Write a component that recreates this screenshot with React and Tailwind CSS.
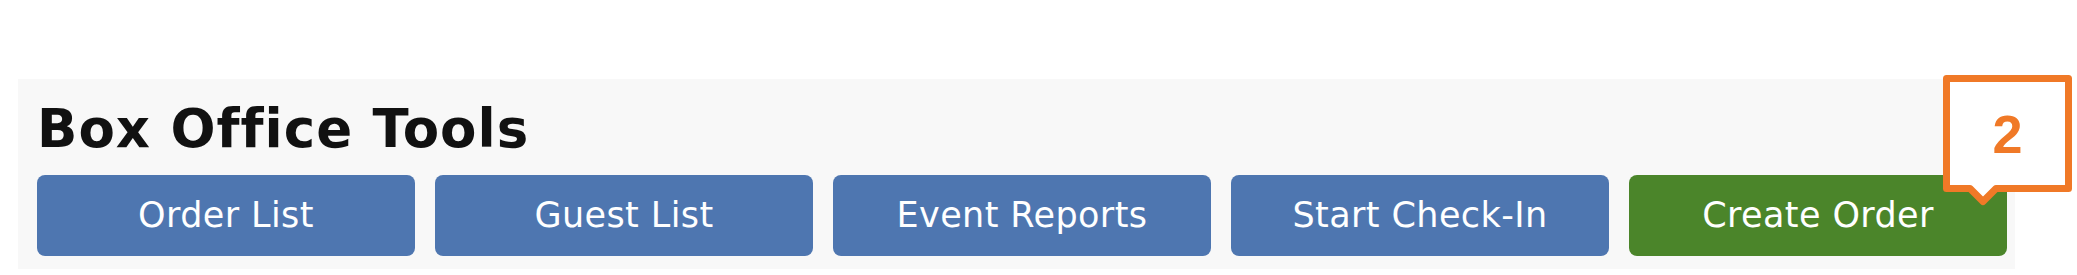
import React from 'react';

const buttons = [
  { label: 'Order List', color: 'bg-[#4e76b0]' },
  { label: 'Guest List', color: 'bg-[#4e76b0]' },
  { label: 'Event Reports', color: 'bg-[#4e76b0]' },
  { label: 'Start Check-In', color: 'bg-[#4e76b0]' },
  { label: 'Create Order', color: 'bg-[#4b852a]' },
];

const Callout = () => (
  <div className="absolute left-[1938px] top-[70px] w-[140px] h-[142px]">
    <svg width="140" height="142" viewBox="0 0 140 142" className="absolute inset-0">
      <path
        d="M8.5 8.5 H130.5 V118.5 H58 L45 131.5 L32 118.5 H8.5 Z"
        fill="#ffffff"
        stroke="#f07927"
        strokeWidth="7"
        strokeLinejoin="round"
      />
    </svg>
    <div className="absolute left-[5px] top-[5px] w-[129px] h-[117px] flex items-center justify-center">
      <span className="text-[54px] leading-none font-bold text-[#f07927] font-['Liberation_Sans',Arial,sans-serif]">
        2
      </span>
    </div>
  </div>
);

const App = () => {
  return (
    <div className="relative w-[2077px] h-[275px] bg-white overflow-hidden font-['DejaVu_Sans',Verdana,sans-serif]">
      <div className="mt-[79px] ml-[18px] w-[1997px] h-[190px] bg-[#f8f8f8] pt-[19px] pl-[19px]">
        <h1 className="text-[53px] leading-[62px] font-bold tracking-[1px] text-[#111111]">Box Office Tools</h1>
        <div className="flex gap-[20px] mt-[15px]">
          {buttons.map((b) => (
            <button
              key={b.label}
              className={`${b.color} w-[378px] h-[81px] rounded-[8px] text-white text-[35px] tracking-[0.4px] flex items-center justify-center`}
            >
              {b.label}
            </button>
          ))}
        </div>
      </div>
      <Callout />
    </div>
  );
};

export default App;
